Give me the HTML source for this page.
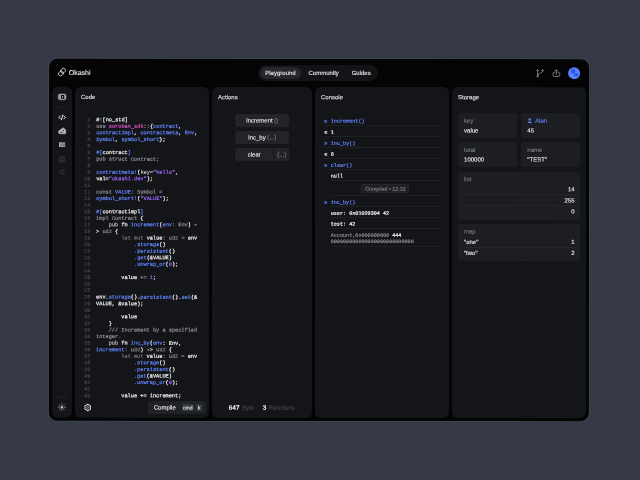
<!DOCTYPE html>
<html lang="en">
<head>
<meta charset="utf-8">
<title>Okashi</title>
<style>
html,body{margin:0;padding:0;}
body{width:640px;height:480px;overflow:hidden;background:#353945;position:relative;font-family:"Liberation Sans", sans-serif;}
#root{position:absolute;left:0;top:0;width:640px;height:480px;will-change:transform;}
#rot{position:absolute;left:0;top:0;width:640px;height:480px;transform:rotate(0.03deg);transform-origin:320px 240px;}
.a{position:absolute;display:block;}
.t{position:absolute;line-height:10px;white-space:pre;margin:0;padding:0;}
.f-s,.f-s span{-webkit-text-stroke:0.1px currentColor;}
.f-m,.f-m span{-webkit-text-stroke:0.22px currentColor;}
.f-s{font-family:"Liberation Sans", sans-serif;}
.f-m{font-family:"Liberation Mono", monospace;}
</style>
</head>
<body>
<div id="root"><div id="rot">
<div class="a" style="left:49.00px;top:58.90px;width:540.00px;height:362.00px;background:#040405;border-radius:8.2px;box-shadow:0 0 0 0.7px #454958;"></div>
<div class="a" style="left:52.00px;top:87.00px;width:20.00px;height:330.80px;background:#141518;border-radius:5.8px;"></div>
<div class="a" style="left:75.00px;top:87.00px;width:134.20px;height:330.80px;background:#141518;border-radius:5.8px;"></div>
<div class="a" style="left:212.20px;top:87.00px;width:99.80px;height:330.80px;background:#141518;border-radius:5.8px;"></div>
<div class="a" style="left:315.10px;top:87.00px;width:134.10px;height:330.80px;background:#141518;border-radius:5.8px;"></div>
<div class="a" style="left:452.20px;top:87.00px;width:134.30px;height:330.80px;background:#141518;border-radius:5.8px;"></div>
<svg class="a" style="left:56.6px;top:67px" width="10" height="10" viewBox="0 0 10 10" fill="none" stroke="#e9e9eb" stroke-width="0.85" stroke-linejoin="round"><rect x="3.5" y="1.8" width="5" height="4.1" rx="1.9" transform="rotate(-45 6 3.85)"/><rect x="1.3" y="4.6" width="5" height="4.100" rx="1.900" transform="rotate(-45 3.800 6.650)"/></svg>
<div class="t f-s" style="top:68px;font-size:7.0px;color:#ececee;left:68px;transform:translate(0.6px,0.1px);">Okashi</div>
<div class="a" style="left:258.30px;top:64.60px;width:119.60px;height:16.40px;background:#121316;border-radius:8.2px;"></div>
<div class="a" style="left:259.90px;top:66.60px;width:41.00px;height:12.60px;background:#26272c;border-radius:6.3px;"></div>
<div class="t f-s" style="top:68px;font-size:6px;color:#ececee;left:265px;transform:translate(0.2px,0.0px);">Playground</div>
<div class="t f-s" style="top:68px;font-size:6px;color:#ececee;left:308px;transform:translate(0.4px,0.0px);">Community</div>
<div class="t f-s" style="top:68px;font-size:6px;color:#ececee;left:351px;transform:translate(0.6px,0.0px);">Guides</div>
<svg class="a" style="left:535px;top:67px" width="10" height="12" viewBox="535 67 10 12" fill="none" stroke="#8e8f94" stroke-width="0.8" stroke-linecap="round"><circle cx="537.500" cy="70.300" r="0.800"/><circle cx="542.500" cy="70.300" r="0.800"/><circle cx="537.500" cy="76" r="0.800"/><path d="M537.500 71.200v3.900M542.500 71.200c0 2.200-5 1.600-5 3.800"/></svg>
<svg class="a" style="left:551px;top:67px" width="11" height="12" viewBox="551 67 11 12" fill="none" stroke="#8e8f94" stroke-width="0.850" stroke-linecap="round" stroke-linejoin="round"><path d="M554.600 72.200h-0.400a1.300 1.300 0 0 0-1.300 1.300v1.300a1.500 1.500 0 0 0 1.500 1.500h3.800a1.500 1.500 0 0 0 1.500-1.500v-1.300a1.300 1.300 0 0 0-1.300-1.300h-0.400"/><path d="M556.300 74.300v-4.500M555 71l1.300-1.300 1.300 1.300"/></svg>
<div class="a" style="left:568.30px;top:66.70px;width:12.00px;height:12.00px;background:#5a82ff;border-radius:6px;"></div>
<div class="a" style="left:570.90px;top:69.40px;width:4.00px;height:3.70px;background:#2a57f0;border-radius:0.3px;"></div>
<div class="a" style="left:573.90px;top:72.60px;width:4.20px;height:3.30px;background:#2a57f0;border-radius:0.3px;"></div>
<svg class="a" style="left:56px;top:92px" width="12" height="10" viewBox="56 92 12 10" ><rect x="58.2" y="94.15" width="7.700" height="5.800" rx="1.700" fill="#98989c" stroke="#bdbdc0" stroke-width="0.5"/><rect x="60.950" y="95.100" width="3.150" height="3.900" rx="0.300" fill="#070709"/><path d="M62 95.950l1.350 1.100-1.350 1.100z" fill="#d6d6d9"/></svg>
<div class="a" style="left:55.60px;top:107.20px;width:12.80px;height:0.60px;background:#212227;border-radius:0px;"></div>
<svg class="a" style="left:56px;top:112px" width="12" height="12" viewBox="56 112 12 12" fill="none" stroke="#f0f0f2" stroke-width="0.95" stroke-linecap="round" stroke-linejoin="round"><path d="M60.3 116l-1.500 1.500 1.500 1.500M63.800 116l1.500 1.500-1.500 1.500M62.800 115.200l-1.450 4.700" /></svg>
<svg class="a" style="left:56px;top:125px" width="12" height="11" viewBox="56 125 12 11" ><path d="M58.6 131.100l1.300-1 3.400-2.200 2.300 2.300 0.200 2.900-0.700 0.800h-5.700l-0.900-0.900z" fill="#b9b9bd" stroke="#c9c9cc" stroke-width="0.5" stroke-linejoin="round"/><circle cx="63.500" cy="130.500" r="0.550" fill="#101013"/><path d="M60.400 132.300h2.200" stroke="#1a1a1d" stroke-width="0.700" stroke-linecap="round"/></svg>
<svg class="a" style="left:58px;top:142px" width="8" height="6" viewBox="58 142 8 6" ><rect x="58.95" y="142.750" width="6.150" height="4.500" rx="0.300" fill="#7c7c81"/><rect x="58.950" y="142.750" width="6.150" height="1.150" fill="#9a9a9e"/><rect x="58.950" y="146.100" width="6.150" height="1.150" fill="#9a9a9e"/><rect x="58.950" y="142.750" width="1.150" height="4.500" fill="#a8a8ac"/></svg>
<svg class="a" style="left:58px;top:155px" width="8" height="9" viewBox="58 155 8 9" fill="none" stroke="#3b3d43" stroke-width="0.800"><rect x="59.400" y="156.600" width="5.100" height="5.500" rx="1.500"/><path d="M59.400 158.600h5.100M59.400 160.400h5.100"/></svg>
<svg class="a" style="left:58px;top:168px" width="8" height="10" viewBox="58 168 8 10" fill="none" stroke="#3b3d43" stroke-width="0.900" stroke-linecap="round" stroke-linejoin="round"><path d="M62.800 170.200c1.100-0.200 1.700 0.700 1.200 1.600-0.600 1-2.400 1.700-3.600 1.500-1-0.200-1.200-1.100-0.500-1.800 0.700-0.700 1.900-1.100 2.900-1.300zM62.400 173.400l1.700 2.200"/></svg>
<div class="a" style="left:55.60px;top:396.90px;width:12.80px;height:0.60px;background:#212227;border-radius:0px;"></div>
<svg class="a" style="left:57px;top:402px" width="10" height="11" viewBox="57 402 10 11" fill="none" stroke="#a2a2a6" stroke-width="0.750" stroke-linecap="round"><circle cx="61.950" cy="407.300" r="1.250" fill="#c4c4c7" stroke="none"/><path d="M58.300 407.300h1.500M64.100 407.300h1.500M61.950 403.900v1.300M61.950 409.400v1.300M59.400 404.900l0.900 0.800M63.600 408.900l0.900 0.800M59.400 409.700l0.900-0.800M63.600 405.700l0.900-0.800"/></svg>
<div class="t f-s" style="top:92px;font-size:6px;color:#ececee;left:80px;transform:translate(0.9px,0.2px);">Code</div>
<div class="t f-s" style="top:92px;font-size:6px;color:#ececee;left:217px;transform:translate(0.9px,0.2px);">Actions</div>
<div class="t f-s" style="top:92px;font-size:6px;color:#ececee;left:320px;transform:translate(0.9px,0.2px);">Console</div>
<div class="t f-s" style="top:92px;font-size:6px;color:#ececee;left:458px;transform:translate(0.0px,0.2px);">Storage</div>
<div class="t f-m" style="top:115px;font-size:5.27px;color:#45474e;right:549.60px;transform:translate(0px,0.3px);">1</div>
<div class="t f-m" style="top:115px;font-size:5.27px;color:#ececee;left:96px;transform:translate(0.1px,0.3px);"><span style="color:#ececee">#</span><span style="color:#5f80f7">!</span><span style="color:#ececee">[no_std]</span></div>
<div class="t f-m" style="top:121px;font-size:5.27px;color:#45474e;right:549.60px;transform:translate(0px,0.87px);">2</div>
<div class="t f-m" style="top:121px;font-size:5.27px;color:#ececee;left:96px;transform:translate(0.1px,0.87px);"><span style="color:#8a8c93">use </span><span style="color:#cf50bf">soroban_sdk</span><span style="color:#b4b5ba">::</span><span style="color:#ececee">{</span><span style="color:#5f80f7">contract</span><span style="color:#ececee">,</span></div>
<div class="t f-m" style="top:128px;font-size:5.27px;color:#45474e;right:549.60px;transform:translate(0px,0.44px);">3</div>
<div class="t f-m" style="top:128px;font-size:5.27px;color:#ececee;left:96px;transform:translate(0.1px,0.44px);"><span style="color:#5f80f7">contractimpl</span><span style="color:#ececee">, </span><span style="color:#5f80f7">contractmeta</span><span style="color:#ececee">, </span><span style="color:#5f80f7">Env</span><span style="color:#ececee">,</span></div>
<div class="t f-m" style="top:135px;font-size:5.27px;color:#45474e;right:549.60px;transform:translate(0px,0.01px);">4</div>
<div class="t f-m" style="top:135px;font-size:5.27px;color:#ececee;left:96px;transform:translate(0.1px,0.01px);"><span style="color:#5f80f7">Symbol</span><span style="color:#ececee">, </span><span style="color:#5f80f7">symbol_short</span><span style="color:#ececee">};</span></div>
<div class="t f-m" style="top:141px;font-size:5.27px;color:#45474e;right:549.60px;transform:translate(0px,0.58px);">5</div>
<div class="t f-m" style="top:148px;font-size:5.27px;color:#45474e;right:549.60px;transform:translate(0px,0.16px);">6</div>
<div class="t f-m" style="top:148px;font-size:5.27px;color:#ececee;left:96px;transform:translate(0.1px,0.16px);"><span style="color:#5f80f7">#[</span><span style="color:#ececee">contract</span><span style="color:#5f80f7">]</span></div>
<div class="t f-m" style="top:154px;font-size:5.27px;color:#45474e;right:549.60px;transform:translate(0px,0.73px);">7</div>
<div class="t f-m" style="top:154px;font-size:5.27px;color:#ececee;left:96px;transform:translate(0.1px,0.73px);"><span style="color:#8a8c93">pub struct Contract;</span></div>
<div class="t f-m" style="top:161px;font-size:5.27px;color:#45474e;right:549.60px;transform:translate(0px,0.3px);">8</div>
<div class="t f-m" style="top:167px;font-size:5.27px;color:#45474e;right:549.60px;transform:translate(0px,0.87px);">9</div>
<div class="t f-m" style="top:167px;font-size:5.27px;color:#ececee;left:96px;transform:translate(0.1px,0.87px);"><span style="color:#5f80f7">contractmeta!</span><span style="color:#ececee">(</span><span style="color:#b4b5ba">key=</span><span style="color:#9766f8">&quot;hello&quot;</span><span style="color:#ececee">,</span></div>
<div class="t f-m" style="top:174px;font-size:5.27px;color:#45474e;right:549.60px;transform:translate(0px,0.44px);">10</div>
<div class="t f-m" style="top:174px;font-size:5.27px;color:#ececee;left:96px;transform:translate(0.1px,0.44px);"><span style="color:#ececee">val=</span><span style="color:#9766f8">&quot;okashi.dev&quot;</span><span style="color:#ececee">);</span></div>
<div class="t f-m" style="top:181px;font-size:5.27px;color:#45474e;right:549.60px;transform:translate(0px,0.01px);">11</div>
<div class="t f-m" style="top:187px;font-size:5.27px;color:#45474e;right:549.60px;transform:translate(0px,0.58px);">12</div>
<div class="t f-m" style="top:187px;font-size:5.27px;color:#ececee;left:96px;transform:translate(0.1px,0.58px);"><span style="color:#8a8c93">const </span><span style="color:#5f80f7">VALUE</span><span style="color:#8a8c93">: Symbol =</span></div>
<div class="t f-m" style="top:194px;font-size:5.27px;color:#45474e;right:549.60px;transform:translate(0px,0.15px);">13</div>
<div class="t f-m" style="top:194px;font-size:5.27px;color:#ececee;left:96px;transform:translate(0.1px,0.15px);"><span style="color:#5f80f7">symbol_short!</span><span style="color:#ececee">(</span><span style="color:#9766f8">&quot;VALUE&quot;</span><span style="color:#ececee">);</span></div>
<div class="t f-m" style="top:200px;font-size:5.27px;color:#45474e;right:549.60px;transform:translate(0px,0.72px);">14</div>
<div class="t f-m" style="top:207px;font-size:5.27px;color:#45474e;right:549.60px;transform:translate(0px,0.29px);">15</div>
<div class="t f-m" style="top:207px;font-size:5.27px;color:#ececee;left:96px;transform:translate(0.1px,0.29px);"><span style="color:#5f80f7">#[</span><span style="color:#ececee">contractimpl</span><span style="color:#5f80f7">]</span></div>
<div class="t f-m" style="top:213px;font-size:5.27px;color:#45474e;right:549.60px;transform:translate(0px,0.87px);">16</div>
<div class="t f-m" style="top:213px;font-size:5.27px;color:#ececee;left:96px;transform:translate(0.1px,0.87px);"><span style="color:#8a8c93">impl Contract </span><span style="color:#ececee">{</span></div>
<div class="t f-m" style="top:220px;font-size:5.27px;color:#45474e;right:549.60px;transform:translate(0px,0.44px);">17</div>
<div class="t f-m" style="top:220px;font-size:5.27px;color:#ececee;left:96px;transform:translate(0.1px,0.44px);"><span style="color:#b4b5ba">    pub </span><span style="color:#ececee">fn </span><span style="color:#5f80f7">increment</span><span style="color:#ececee">(</span><span style="color:#5f80f7">env</span><span style="color:#8a8c93">: Env</span><span style="color:#ececee">) -</span></div>
<div class="t f-m" style="top:227px;font-size:5.27px;color:#45474e;right:549.60px;transform:translate(0px,0.01px);">18</div>
<div class="t f-m" style="top:227px;font-size:5.27px;color:#ececee;left:96px;transform:translate(0.1px,0.01px);"><span style="color:#ececee">&gt; </span><span style="color:#8a8c93">u32 </span><span style="color:#ececee">{</span></div>
<div class="t f-m" style="top:233px;font-size:5.27px;color:#45474e;right:549.60px;transform:translate(0px,0.58px);">19</div>
<div class="t f-m" style="top:233px;font-size:5.27px;color:#ececee;left:96px;transform:translate(0.1px,0.58px);"><span style="color:#6c6e75">        let mut </span><span style="color:#ececee">value</span><span style="color:#8a8c93">: u32 = </span><span style="color:#ececee">env</span></div>
<div class="t f-m" style="top:240px;font-size:5.27px;color:#45474e;right:549.60px;transform:translate(0px,0.15px);">20</div>
<div class="t f-m" style="top:240px;font-size:5.27px;color:#ececee;left:96px;transform:translate(0.1px,0.15px);"><span style="color:#5f80f7">            .storage</span><span style="color:#ececee">()</span></div>
<div class="t f-m" style="top:246px;font-size:5.27px;color:#45474e;right:549.60px;transform:translate(0px,0.72px);">21</div>
<div class="t f-m" style="top:246px;font-size:5.27px;color:#ececee;left:96px;transform:translate(0.1px,0.72px);"><span style="color:#5f80f7">            .persistent</span><span style="color:#ececee">()</span></div>
<div class="t f-m" style="top:253px;font-size:5.27px;color:#45474e;right:549.60px;transform:translate(0px,0.29px);">22</div>
<div class="t f-m" style="top:253px;font-size:5.27px;color:#ececee;left:96px;transform:translate(0.1px,0.29px);"><span style="color:#5f80f7">            .get</span><span style="color:#ececee">(&amp;VALUE)</span></div>
<div class="t f-m" style="top:259px;font-size:5.27px;color:#45474e;right:549.60px;transform:translate(0px,0.86px);">23</div>
<div class="t f-m" style="top:259px;font-size:5.27px;color:#ececee;left:96px;transform:translate(0.1px,0.86px);"><span style="color:#5f80f7">            .unwrap_or</span><span style="color:#ececee">(</span><span style="color:#9766f8">0</span><span style="color:#ececee">);</span></div>
<div class="t f-m" style="top:266px;font-size:5.27px;color:#45474e;right:549.60px;transform:translate(0px,0.43px);">24</div>
<div class="t f-m" style="top:273px;font-size:5.27px;color:#45474e;right:549.60px;">25</div>
<div class="t f-m" style="top:273px;font-size:5.27px;color:#ececee;left:96px;transform:translate(0.1px,0.0px);"><span style="color:#ececee">        value </span><span style="color:#8a8c93">+= </span><span style="color:#9766f8">1</span><span style="color:#ececee">;</span></div>
<div class="t f-m" style="top:279px;font-size:5.27px;color:#45474e;right:549.60px;transform:translate(0px,0.57px);">26</div>
<div class="t f-m" style="top:286px;font-size:5.27px;color:#45474e;right:549.60px;transform:translate(0px,0.15px);">27</div>
<div class="t f-m" style="top:292px;font-size:5.27px;color:#45474e;right:549.60px;transform:translate(0px,0.72px);">28</div>
<div class="t f-m" style="top:292px;font-size:5.27px;color:#ececee;left:96px;transform:translate(0.1px,0.72px);"><span style="color:#ececee">env.</span><span style="color:#5f80f7">storage</span><span style="color:#ececee">().</span><span style="color:#5f80f7">persistent</span><span style="color:#ececee">().</span><span style="color:#5f80f7">set</span><span style="color:#ececee">(&amp;</span></div>
<div class="t f-m" style="top:299px;font-size:5.27px;color:#45474e;right:549.60px;transform:translate(0px,0.29px);">29</div>
<div class="t f-m" style="top:299px;font-size:5.27px;color:#ececee;left:96px;transform:translate(0.1px,0.29px);"><span style="color:#ececee">VALUE, &amp;value);</span></div>
<div class="t f-m" style="top:305px;font-size:5.27px;color:#45474e;right:549.60px;transform:translate(0px,0.86px);">30</div>
<div class="t f-m" style="top:312px;font-size:5.27px;color:#45474e;right:549.60px;transform:translate(0px,0.43px);">31</div>
<div class="t f-m" style="top:312px;font-size:5.27px;color:#ececee;left:96px;transform:translate(0.1px,0.43px);"><span style="color:#ececee">        value</span></div>
<div class="t f-m" style="top:319px;font-size:5.27px;color:#45474e;right:549.60px;">32</div>
<div class="t f-m" style="top:319px;font-size:5.27px;color:#ececee;left:96px;transform:translate(0.1px,0.0px);"><span style="color:#ececee">    }</span></div>
<div class="t f-m" style="top:325px;font-size:5.27px;color:#45474e;right:549.60px;transform:translate(0px,0.57px);">33</div>
<div class="t f-m" style="top:325px;font-size:5.27px;color:#ececee;left:96px;transform:translate(0.1px,0.57px);"><span style="color:#8a8c93">    /// Increment by a specified</span></div>
<div class="t f-m" style="top:332px;font-size:5.27px;color:#45474e;right:549.60px;transform:translate(0px,0.14px);">34</div>
<div class="t f-m" style="top:332px;font-size:5.27px;color:#ececee;left:96px;transform:translate(0.1px,0.14px);"><span style="color:#8a8c93">integer.</span></div>
<div class="t f-m" style="top:338px;font-size:5.27px;color:#45474e;right:549.60px;transform:translate(0px,0.71px);">35</div>
<div class="t f-m" style="top:338px;font-size:5.27px;color:#ececee;left:96px;transform:translate(0.1px,0.71px);"><span style="color:#b4b5ba">    pub </span><span style="color:#ececee">fn </span><span style="color:#5f80f7">inc_by</span><span style="color:#ececee">(</span><span style="color:#5f80f7">env</span><span style="color:#ececee">: Env,</span></div>
<div class="t f-m" style="top:345px;font-size:5.27px;color:#45474e;right:549.60px;transform:translate(0px,0.28px);">36</div>
<div class="t f-m" style="top:345px;font-size:5.27px;color:#ececee;left:96px;transform:translate(0.1px,0.28px);"><span style="color:#5f80f7">increment</span><span style="color:#8a8c93">: u32</span><span style="color:#ececee">) -&gt; </span><span style="color:#8a8c93">u32 </span><span style="color:#ececee">{</span></div>
<div class="t f-m" style="top:351px;font-size:5.27px;color:#45474e;right:549.60px;transform:translate(0px,0.86px);">37</div>
<div class="t f-m" style="top:351px;font-size:5.27px;color:#ececee;left:96px;transform:translate(0.1px,0.86px);"><span style="color:#6c6e75">        let mut </span><span style="color:#ececee">value</span><span style="color:#8a8c93">: u32 = </span><span style="color:#ececee">env</span></div>
<div class="t f-m" style="top:358px;font-size:5.27px;color:#45474e;right:549.60px;transform:translate(0px,0.43px);">38</div>
<div class="t f-m" style="top:358px;font-size:5.27px;color:#ececee;left:96px;transform:translate(0.1px,0.43px);"><span style="color:#5f80f7">            .storage</span><span style="color:#ececee">()</span></div>
<div class="t f-m" style="top:364px;font-size:5.27px;color:#45474e;right:549.60px;transform:translate(0px,1.0px);">39</div>
<div class="t f-m" style="top:364px;font-size:5.27px;color:#ececee;left:96px;transform:translate(0.1px,1.0px);"><span style="color:#5f80f7">            .persistent</span><span style="color:#ececee">()</span></div>
<div class="t f-m" style="top:371px;font-size:5.27px;color:#45474e;right:549.60px;transform:translate(0px,0.57px);">40</div>
<div class="t f-m" style="top:371px;font-size:5.27px;color:#ececee;left:96px;transform:translate(0.1px,0.57px);"><span style="color:#5f80f7">            .get</span><span style="color:#ececee">(&amp;VALUE)</span></div>
<div class="t f-m" style="top:378px;font-size:5.27px;color:#45474e;right:549.60px;transform:translate(0px,0.14px);">41</div>
<div class="t f-m" style="top:378px;font-size:5.27px;color:#ececee;left:96px;transform:translate(0.1px,0.14px);"><span style="color:#5f80f7">            .unwrap_or</span><span style="color:#ececee">(</span><span style="color:#9766f8">0</span><span style="color:#ececee">);</span></div>
<div class="t f-m" style="top:384px;font-size:5.27px;color:#45474e;right:549.60px;transform:translate(0px,0.71px);">42</div>
<div class="t f-m" style="top:391px;font-size:5.27px;color:#45474e;right:549.60px;transform:translate(0px,0.28px);">43</div>
<div class="t f-m" style="top:391px;font-size:5.27px;color:#ececee;left:96px;transform:translate(0.1px,0.28px);"><span style="color:#ececee">        value += increment;</span></div>
<svg class="a" style="left:83px;top:402px" width="10" height="11" viewBox="83 402 10 11" fill="none" stroke="#d2d2d5"><path d="M87.80 404.40 L90.57 406.00 L90.57 409.20 L87.80 410.80 L85.03 409.20 L85.03 406.00Z" stroke-width="1.05" stroke-linejoin="round"/><circle cx="87.8" cy="407.6" r="1.05" stroke-width="0.7"/></svg>
<div class="a" style="left:148.10px;top:401.00px;width:57.50px;height:13.20px;background:#212226;border-radius:3.5px;"></div>
<div class="t f-s" style="top:402px;font-size:6px;color:#ececee;left:153px;transform:translate(0.8px,0.7px);">Compile</div>
<div class="a" style="left:181.90px;top:404.30px;width:12.10px;height:6.70px;background:#343945;border-radius:1.6px;"></div>
<div class="a" style="left:196.00px;top:404.30px;width:6.30px;height:6.70px;background:#343945;border-radius:1.6px;"></div>
<div class="t f-s" style="top:402px;font-size:5.1px;color:#eceef2;left:87.95px;width:200px;text-align:center;transform:translate(0px,0.45px);">cmd</div>
<div class="t f-s" style="top:402px;font-size:5.1px;color:#eceef2;left:99.15px;width:200px;text-align:center;transform:translate(0px,0.45px);">k</div>
<div class="a" style="left:213.2px;top:108.6px;width:97.600px;height:286px;background-image:radial-gradient(circle,#23242a 0.55px,transparent 0.85px);background-size:4.42px 4.42px;background-position:-0.9px -0.9px"></div>
<div class="a" style="left:235.20px;top:114.00px;width:54.20px;height:12.90px;background:#232428;border-radius:3.2px;"></div>
<div class="t f-s" style="top:115px;font-size:6px;color:#ececee;left:162.30px;width:200px;text-align:center;transform:translate(0px,0.5px);">increment <span style="color:#7c7e86">()</span></div>
<div class="a" style="left:235.20px;top:131.00px;width:54.20px;height:12.90px;background:#232428;border-radius:3.2px;"></div>
<div class="t f-s" style="top:132px;font-size:6px;color:#ececee;left:162.30px;width:200px;text-align:center;transform:translate(0px,0.5px);">inc_by <span style="color:#7c7e86">(...)</span></div>
<div class="a" style="left:235.20px;top:148.10px;width:54.20px;height:13.00px;background:#232428;border-radius:3.2px;"></div>
<div class="a" style="left:273.30px;top:148.10px;width:0.60px;height:13.00px;background:#17181b;border-radius:0px;"></div>
<div class="t f-s" style="top:149px;font-size:6px;color:#ececee;left:154.25px;width:200px;text-align:center;transform:translate(0px,0.65px);">clear</div>
<div class="t f-s" style="top:149px;font-size:6px;color:#7c7e86;left:181.65px;width:200px;text-align:center;transform:translate(0px,0.65px);">(...)</div>
<div class="t f-s" style="top:402px;font-size:6.4px;color:#ececee;left:228px;transform:translate(0.9px,0.8px);font-weight:bold;">647</div>
<div class="t f-s" style="top:402px;font-size:6px;color:#484a51;left:242px;transform:translate(0.4px,0.8px);">Byte</div>
<div class="t f-s" style="top:402px;font-size:6.4px;color:#ececee;left:262px;transform:translate(0.8px,0.8px);font-weight:bold;">3</div>
<div class="t f-s" style="top:402px;font-size:6px;color:#484a51;left:268px;transform:translate(0.6px,0.8px);">Functions</div>
<div class="t f-m" style="top:116px;font-size:5.8px;color:#5f80f7;left:323px;transform:translate(0.9px,0.95px);">»</div>
<div class="t f-m" style="top:116px;font-size:5.13px;color:#5f80f7;left:330px;transform:translate(0.7px,0.55px);">increment()</div>
<div class="a" style="left:324.20px;top:125.30px;width:116.00px;height:0.60px;background:#1f2024;border-radius:0px;"></div>
<div class="t f-m" style="top:128px;font-size:5.8px;color:#ececee;left:323px;transform:translate(0.9px,0.05px);">«</div>
<div class="t f-m" style="top:127px;font-size:5.13px;color:#ececee;left:330px;transform:translate(0.7px,0.65px);">1</div>
<div class="a" style="left:324.20px;top:136.40px;width:116.00px;height:0.60px;background:#1f2024;border-radius:0px;"></div>
<div class="t f-m" style="top:139px;font-size:5.8px;color:#5f80f7;left:323px;transform:translate(0.9px,0.05px);">»</div>
<div class="t f-m" style="top:138px;font-size:5.13px;color:#5f80f7;left:330px;transform:translate(0.7px,0.65px);">inc_by()</div>
<div class="a" style="left:324.20px;top:147.30px;width:116.00px;height:0.60px;background:#1f2024;border-radius:0px;"></div>
<div class="t f-m" style="top:150px;font-size:5.8px;color:#ececee;left:323px;transform:translate(0.9px,0.05px);">«</div>
<div class="t f-m" style="top:149px;font-size:5.13px;color:#ececee;left:330px;transform:translate(0.7px,0.65px);">6</div>
<div class="a" style="left:324.20px;top:158.30px;width:116.00px;height:0.60px;background:#1f2024;border-radius:0px;"></div>
<div class="t f-m" style="top:161px;font-size:5.8px;color:#5f80f7;left:323px;transform:translate(0.9px,0.05px);">»</div>
<div class="t f-m" style="top:160px;font-size:5.13px;color:#5f80f7;left:330px;transform:translate(0.7px,0.65px);">clear()</div>
<div class="a" style="left:324.20px;top:169.30px;width:116.00px;height:0.60px;background:#1f2024;border-radius:0px;"></div>
<div class="t f-m" style="top:171px;font-size:5.13px;color:#ececee;left:330px;transform:translate(0.7px,0.55px);">null</div>
<div class="a" style="left:330.70px;top:180.30px;width:109.50px;height:0.60px;background:#1f2024;border-radius:0px;"></div>
<div class="a" style="left:361.20px;top:184.40px;width:48.30px;height:8.70px;background:#202125;border-radius:2.2px;box-shadow:0 0 0 0.5px #2a2b30 inset;"></div>
<div class="t f-s" style="top:183px;font-size:5.3px;color:#85868c;left:285.35px;width:200px;text-align:center;transform:translate(0px,0.6px);">Compiled • 12:32</div>
<div class="a" style="left:330.70px;top:195.30px;width:109.50px;height:0.60px;background:#1f2024;border-radius:0px;"></div>
<div class="t f-m" style="top:198px;font-size:5.8px;color:#5f80f7;left:323px;transform:translate(0.9px,0.15px);">»</div>
<div class="t f-m" style="top:197px;font-size:5.13px;color:#5f80f7;left:330px;transform:translate(0.7px,0.75px);">inc_by()</div>
<div class="a" style="left:330.70px;top:206.40px;width:109.50px;height:0.60px;background:#1f2024;border-radius:0px;"></div>
<div class="t f-m" style="top:208px;font-size:5.13px;color:#ececee;left:330px;transform:translate(0.7px,0.75px);">user: 0x01020304 42</div>
<div class="a" style="left:330.70px;top:217.30px;width:109.50px;height:0.60px;background:#1f2024;border-radius:0px;"></div>
<div class="t f-m" style="top:219px;font-size:5.13px;color:#ececee;left:330px;transform:translate(0.7px,0.55px);">test: 42</div>
<div class="a" style="left:330.70px;top:228.10px;width:109.50px;height:0.60px;background:#1f2024;border-radius:0px;"></div>
<div class="t f-m" style="top:230px;font-size:5.13px;color:#ececee;left:330px;transform:translate(0.7px,0.75px);"><span style="color:#85868c">Account,0x000000000</span> 444</div>
<div class="t f-m" style="top:237px;font-size:5.13px;color:#85868c;left:330px;transform:translate(0.7px,0.0px);">000000000000000000000000000</div>
<div class="a" style="left:330.70px;top:246.10px;width:109.50px;height:0.60px;background:#1f2024;border-radius:0px;"></div>
<div class="a" style="left:457.80px;top:113.00px;width:59.10px;height:24.90px;background:#1d1e22;border-radius:3.2px;"></div>
<div class="a" style="left:521.30px;top:113.00px;width:59.20px;height:24.90px;background:#1d1e22;border-radius:3.2px;"></div>
<div class="a" style="left:457.80px;top:142.20px;width:59.10px;height:25.10px;background:#1d1e22;border-radius:3.2px;"></div>
<div class="a" style="left:521.30px;top:142.20px;width:59.20px;height:25.10px;background:#1d1e22;border-radius:3.2px;"></div>
<div class="t f-s" style="top:115px;font-size:6px;color:#7c7e86;left:464px;transform:translate(0px,0.6px);">key</div>
<div class="t f-s" style="top:125px;font-size:6px;color:#ececee;left:464px;transform:translate(0px,0.35px);">value</div>
<div class="t f-s" style="top:145px;font-size:6px;color:#7c7e86;left:464px;">total</div>
<div class="t f-s" style="top:154px;font-size:6px;color:#ececee;left:464px;transform:translate(0px,0.45px);">100000</div>
<svg class="a" style="left:527.4px;top:117.8px" width="5.400" height="5.600" viewBox="0 0 14 14.500" fill="#5f80f7"><circle cx="7" cy="3.600" r="3.200"/><path d="M0.600 14.500c0-4 2.600-6 6.400-6s6.400 2 6.400 6z"/></svg>
<div class="t f-s" style="top:115px;font-size:6px;color:#5f80f7;left:535px;transform:translate(0px,0.6px);">Alan</div>
<div class="t f-s" style="top:125px;font-size:6px;color:#ececee;left:527px;transform:translate(0.3px,0.35px);">45</div>
<div class="t f-s" style="top:145px;font-size:6px;color:#7c7e86;left:527px;transform:translate(0.3px,0.0px);">name</div>
<div class="t f-s" style="top:154px;font-size:6px;color:#ececee;left:527px;transform:translate(0.3px,0.45px);">&quot;TEST&quot;</div>
<div class="a" style="left:457.80px;top:171.60px;width:122.70px;height:48.40px;background:#1d1e22;border-radius:3.2px;"></div>
<div class="t f-s" style="top:174px;font-size:6px;color:#7c7e86;left:464px;transform:translate(0px,0.2px);">list</div>
<div class="t f-s" style="top:184px;font-size:6px;color:#ececee;right:65.40px;transform:translate(0px,0.1px);">14</div>
<div class="a" style="left:460.70px;top:194.00px;width:116.90px;height:0.60px;background:#26272c;border-radius:0px;"></div>
<div class="t f-s" style="top:195px;font-size:6px;color:#ececee;right:65.40px;transform:translate(0px,0.4px);">255</div>
<div class="a" style="left:460.70px;top:205.20px;width:116.90px;height:0.60px;background:#26272c;border-radius:0px;"></div>
<div class="t f-s" style="top:206px;font-size:6px;color:#ececee;right:65.40px;transform:translate(0px,0.4px);">0</div>
<div class="a" style="left:457.80px;top:223.80px;width:122.70px;height:37.50px;background:#1d1e22;border-radius:3.2px;"></div>
<div class="t f-s" style="top:226px;font-size:6px;color:#7c7e86;left:464px;transform:translate(0px,0.5px);">map</div>
<div class="t f-s" style="top:236px;font-size:6px;color:#ececee;left:464px;transform:translate(0px,0.8px);">&quot;one&quot;</div>
<div class="t f-s" style="top:236px;font-size:6px;color:#ececee;right:65.40px;transform:translate(0px,0.8px);">1</div>
<div class="a" style="left:460.70px;top:246.80px;width:116.90px;height:0.60px;background:#26272c;border-radius:0px;"></div>
<div class="t f-s" style="top:247px;font-size:6px;color:#ececee;left:464px;transform:translate(0px,0.8px);">&quot;two&quot;</div>
<div class="t f-s" style="top:247px;font-size:6px;color:#ececee;right:65.40px;transform:translate(0px,0.8px);">2</div>
</div></div>
</body>
</html>
